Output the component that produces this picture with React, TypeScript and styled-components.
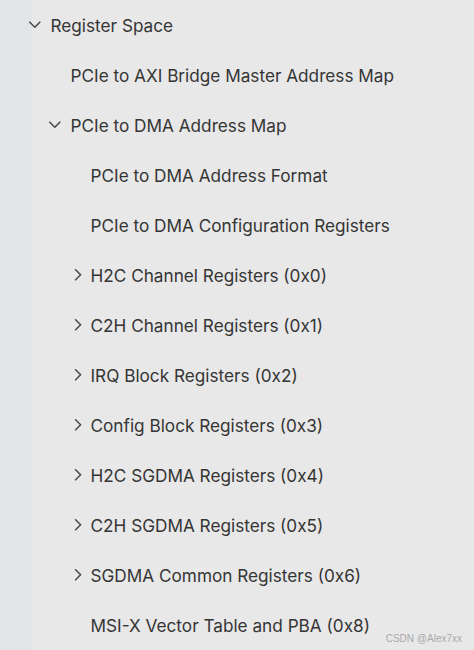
import React from 'react'
import styled, { createGlobalStyle } from 'styled-components'

type Node = {
  label: string
  level: number
  chevron?: 'open' | 'closed'
}

const nodes: Node[] = [
  { label: 'Register Space', level: 0, chevron: 'open' },
  { label: 'PCIe to AXI Bridge Master Address Map', level: 1 },
  { label: 'PCIe to DMA Address Map', level: 1, chevron: 'open' },
  { label: 'PCIe to DMA Address Format', level: 2 },
  { label: 'PCIe to DMA Configuration Registers', level: 2 },
  { label: 'H2C Channel Registers (0x0)', level: 2, chevron: 'closed' },
  { label: 'C2H Channel Registers (0x1)', level: 2, chevron: 'closed' },
  { label: 'IRQ Block Registers (0x2)', level: 2, chevron: 'closed' },
  { label: 'Config Block Registers (0x3)', level: 2, chevron: 'closed' },
  { label: 'H2C SGDMA Registers (0x4)', level: 2, chevron: 'closed' },
  { label: 'C2H SGDMA Registers (0x5)', level: 2, chevron: 'closed' },
  { label: 'SGDMA Common Registers (0x6)', level: 2, chevron: 'closed' },
  { label: 'MSI-X Vector Table and PBA (0x8)', level: 2 },
]

const GlobalStyle = createGlobalStyle`
  html, body {
    margin: 0;
    padding: 0;
    background: #e8e8e8;
  }
`

const Page = styled.div`
  position: relative;
  width: 474px;
  height: 650px;
  overflow: hidden;
  background: linear-gradient(to right, #e2e5e8 0, #e2e5e8 32px, #e8e8e8 32px);
  font-family: Inter, 'Noto Sans', sans-serif;
`

const Tree = styled.ul`
  margin: 0;
  padding: 0 0 0 29px;
  list-style: none;
`

const Row = styled.li<{ $level: number }>`
  display: flex;
  align-items: center;
  height: 50px;
  padding-left: ${({ $level }) => $level * 20}px;
  color: #353535;
  font-size: 17.2px;
  white-space: nowrap;
`

const Toggle = styled.span`
  display: flex;
  align-items: center;
  flex: 0 0 21.5px;
  color: #4d4d4d;
`

const Label = styled.span`
  letter-spacing: 0;
`

const Watermark = styled.div`
  position: absolute;
  right: 12px;
  bottom: 6px;
  color: #a9a9a9;
  font-family: 'Liberation Sans', Arial, sans-serif;
  font-size: 10px;
`

const Chevron = ({ open }: { open: boolean }) => (
  <svg width="13" height="12" viewBox="0 0 13 12" fill="none">
    {open ? (
      <path d="M0.8 3.2 5.8 8.2l5-5" stroke="currentColor" strokeWidth="1.6" strokeLinecap="round" strokeLinejoin="round" />
    ) : (
      <path d="M6.6 0.8 11.6 5.8l-5 5" stroke="currentColor" strokeWidth="1.6" strokeLinecap="round" strokeLinejoin="round" />
    )}
  </svg>
)

export default function App() {
  return (
    <Page>
      <GlobalStyle />
      <Tree>
        {nodes.map((node) => (
          <Row key={node.label} $level={node.level}>
            <Toggle>{node.chevron && <Chevron open={node.chevron === 'open'} />}</Toggle>
            <Label>{node.label}</Label>
          </Row>
        ))}
      </Tree>
      <Watermark>CSDN @Alex7xx</Watermark>
    </Page>
  )
}
